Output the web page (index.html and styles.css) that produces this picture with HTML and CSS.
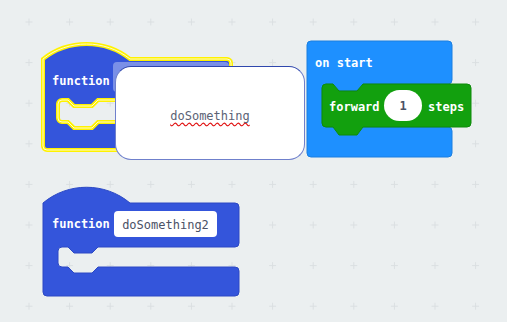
FILE: index.html
```html
<!DOCTYPE html>
<html lang="en">
    <head>
        <meta charset="utf-8">
        <title>Blocks workspace</title>
        <link rel="stylesheet" href="styles.css">
    </head>
    <body>
        <div class="workspace">
            <svg class="canvas" width="507" height="322" viewBox="0 0 507 322">
                <defs>
                    <pattern id="grid" patternUnits="userSpaceOnUse" x="8.7" y="1.7" width="40.6" height="40.6">
                        <path class="grid-cross" d="M16.8 20.3 H23.8 M20.3 16.8 V23.8"/>
                    </pattern>
                </defs>
                <rect width="507" height="322" fill="url(#grid)"/>

                <!-- function doSomething (selected, being renamed) -->
                <g class="block">
                    <path class="fn-body selected-edge" d="M43 59 c25 -20 62 -20 87 0 H227 a4 4 0 0 1 4 4 V96 a4 4 0 0 1 -4 4 H98 l-6 6 H74 l-6 -6 H62 a4 4 0 0 0 -4 4 V118 a4 4 0 0 0 4 4 H68 l6 6 H92 l6 -6 H227 a4 4 0 0 1 4 4 V146 a4 4 0 0 1 -4 4 H47 a4 4 0 0 1 -4 -4 Z"/>
                    <path class="selected-line" d="M43 59 c25 -20 62 -20 87 0 H227 a4 4 0 0 1 4 4 V96 a4 4 0 0 1 -4 4 H98 l-6 6 H74 l-6 -6 H62 a4 4 0 0 0 -4 4 V118 a4 4 0 0 0 4 4 H68 l6 6 H92 l6 -6 H227 a4 4 0 0 1 4 4 V146 a4 4 0 0 1 -4 4 H47 a4 4 0 0 1 -4 -4 Z"/>
                    <text class="blk-label" x="52" y="85">function</text>
                    <rect class="field-ghost" x="113" y="62" width="116" height="30" rx="4"/>
                </g>

                <!-- on start -->
                <g class="block">
                    <path class="start-body" d="M311 41 H448 a4 4 0 0 1 4 4 V80 a4 4 0 0 1 -4 4 H363 l-6 7 H339 l-6 -7 H326 a4 4 0 0 0 -4 4 V123 a4 4 0 0 0 4 4 H448 a4 4 0 0 1 4 4 V153 a4 4 0 0 1 -4 4 H311 a4 4 0 0 1 -4 -4 V45 a4 4 0 0 1 4 -4 Z"/>
                    <text class="blk-label" x="315" y="67">on start</text>

                    <path class="move-body" d="M326 84 H333 l6 7 H357 l6 -7 H467 a4 4 0 0 1 4 4 V123 a4 4 0 0 1 -4 4 H363 l-6 8 H339 l-6 -8 H326 a4 4 0 0 1 -4 -4 V88 a4 4 0 0 1 4 -4 Z"/>
                    <text class="blk-label" x="329" y="111">forward</text>
                    <rect class="field" x="384" y="90" width="38" height="31" rx="15.5"/>
                    <text class="field-text field-num" x="403" y="110">1</text>
                    <text class="blk-label" x="428" y="111">steps</text>
                </g>

                <!-- function doSomething2 -->
                <g class="block">
                    <path class="fn-body" d="M43 203 c25 -21 62 -21 87 0 H235 a4 4 0 0 1 4 4 V243 a4 4 0 0 1 -4 4 H98 l-6 6 H74 l-6 -6 H62 a4 4 0 0 0 -4 4 V263 a4 4 0 0 0 4 4 H68 l6 6 H92 l6 -6 H235 a4 4 0 0 1 4 4 V292 a4 4 0 0 1 -4 4 H47 a4 4 0 0 1 -4 -4 Z"/>
                    <text class="blk-label" x="52" y="228">function</text>
                    <rect class="field" x="114" y="211" width="103" height="26" rx="4"/>
                    <text class="field-text" x="165.5" y="229">doSomething2</text>
                </g>
            </svg>

            <div class="name-editor">
                <span class="name-input">doSomething</span>
            </div>
        </div>
    </body>
</html>
```

FILE: styles.css
```css
html, body {
    margin:0;
    padding:0;
}

.workspace {
    position:relative;
    width:507px;
    height:322px;
    background-color:#ebeff0;
    overflow:hidden;
}

.canvas {
    display:block;
}

.grid-cross {
    stroke:#dadfe1;
    stroke-width:1;
    fill:none;
}

.fn-body {
    fill:#3455db;
    stroke:#2c49c4;
    stroke-width:1;
}

.selected-edge {
    stroke:#fff200;
    stroke-width:4;
}

.selected-line {
    fill:none;
    stroke:#fffbcf;
    stroke-width:1;
}

.start-body {
    fill:#1e90ff;
    stroke:#1b7fe0;
    stroke-width:1;
}

.move-body {
    fill:#12a00e;
    stroke:#0e8a0b;
    stroke-width:1;
}

.blk-label {
    font-family:"DejaVu Sans Mono", monospace;
    font-size:12px;
    font-weight:bold;
    fill:#fff;
}

.field {
    fill:#fff;
}

.field-ghost {
    fill:#fff;
    opacity:0.35;
}

.field-text {
    font-family:"DejaVu Sans Mono", monospace;
    font-size:12px;
    fill:#4b5266;
    text-anchor:middle;
}

.field-num {
    font-weight:bold;
}

.name-editor {
    position:absolute;
    left:115px;
    top:66px;
    width:190px;
    height:94px;
    box-sizing:border-box;
    border:1px solid #6f80cc;
    border-top-color:#2f47ad;
    border-radius:16px;
    background-color:#fff;
    display:flex;
    align-items:center;
    justify-content:center;
}

.name-input {
    font-family:"DejaVu Sans Mono", monospace;
    font-size:12px;
    color:#5b6275;
    text-decoration:underline wavy #e01010;
    text-decoration-skip-ink:none;
    text-underline-offset:2px;
    padding-top:5px;
}
```
